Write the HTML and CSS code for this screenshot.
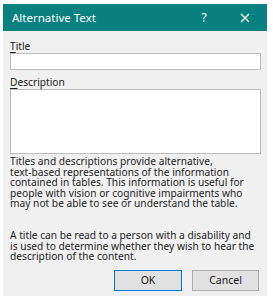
FILE: index.html
```html
<!DOCTYPE html>
<html>
<head>
<meta charset="utf-8">
<link rel="stylesheet" href="styles.css">
</head>
<body>
<div class="dialog">
  <div class="titlebar">
    <span class="title">Alternative Text</span>
    <span class="help">?</span>
    <span class="close">
      <svg width="10" height="10" viewBox="0 0 10 10"><path d="M1 1L9 9M9 1L1 9" stroke="#fff" stroke-width="1.2" fill="none"/></svg>
    </span>
  </div>
  <div class="content">
    <div class="label"><u>T</u>itle</div>
    <div class="input"></div>
    <div class="label label-desc"><u>D</u>escription</div>
    <div class="textarea"></div>
    <p class="info">Titles and descriptions provide alternative, <span class="nowrap">text-based</span> representations of the information contained in tables. This information is useful for people with vision or cognitive impairments who may not be able to see or understand the table.</p>
    <p class="info info2">A title can be read to a person with a disability and is used to determine whether they wish to hear the description of the content.</p>
    <div class="buttons">
      <div class="btn btn-ok">OK</div>
      <div class="btn">Cancel</div>
    </div>
  </div>
</div>
</body>
</html>
```
FILE: styles.css
```css
html, body {
  margin: 0;
  padding: 0;
  background: #ffffff;
}
body {
  padding: 4px 0 0 3px;
  font-family: "Noto Sans", "Open Sans", sans-serif;
}
.dialog {
  width: 264px;
  height: 292px;
  background: #f0f0f0;
  display: flex;
  flex-direction: column;
}
.titlebar {
  height: 27px;
  background: #0a8080;
  color: #ffffff;
  display: flex;
  align-items: center;
  font-size: 11.5px;
}
.title {
  padding-left: 9px;
  flex: 1;
}
.help {
  width: 12px;
  text-align: center;
  margin-right: 30px;
  font-size: 12px;
}
.close {
  display: flex;
  margin-right: 17px;
}
.content {
  padding: 0 6px 0 7px;
  display: flex;
  flex-direction: column;
  color: #1e1e1e;
  font-size: 10.2px;
}
.label {
  margin-top: 8px;
  height: 14px;
  line-height: 14px;
  color: #1a1a1a;
}
.label u {
  text-decoration-thickness: 1px;
  text-underline-offset: 2px;
}
.label-desc {
  margin-top: 5px;
}
.input {
  height: 15px;
  background: #ffffff;
  border: 1px solid #bcbcbc;
}
.textarea {
  height: 63px;
  background: #ffffff;
  border: 1px solid #bcbcbc;
}
.info {
  margin: 2px 0 0 0;
  width: 248px;
  line-height: 10.6px;
}
.nowrap {
  display: inline-block;
  white-space: nowrap;
  line-height: 10.6px;
  height: 10.6px;
  vertical-align: baseline;
}
.info2 {
  margin-top: 21px;
}
.buttons {
  display: flex;
  justify-content: flex-end;
  gap: 10px;
  margin-top: 8px;
  margin-right: 2px;
}
.btn {
  width: 65px;
  height: 19px;
  background: #e1e1e1;
  border: 1px solid #adadad;
  display: flex;
  align-items: center;
  justify-content: center;
  font-size: 10.5px;
  color: #1a1a1a;
}
.btn-ok {
  width: 66px;
  border: 1px solid #0078d7;
}
```
